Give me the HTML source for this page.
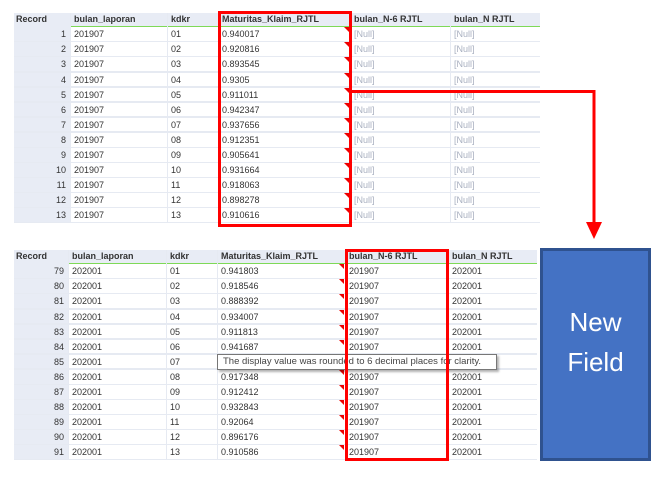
<!DOCTYPE html>
<html><head><meta charset="utf-8">
<style>
*{margin:0;padding:0;box-sizing:border-box}
body{width:667px;height:481px;background:#fff;position:relative;overflow:hidden;font-family:"Liberation Sans",sans-serif;font-size:9px;color:#333}
.t{position:absolute;background:#e6eaf2}
.r{position:absolute;left:0;height:15.1px;width:100%}
.c{position:absolute;top:0;height:13.6px;background:#fff;line-height:14px;padding-left:3px;white-space:nowrap}
.rec{background:#e8ecf5;text-align:right;padding-right:4px}
.h .c{background:#e8ecf5;font-weight:bold;color:#333;line-height:13px;height:14px}
.h .c.g{border-bottom:1px solid #7ed957}
.null{color:#a9b0c0}
.tri{position:absolute;right:1px;top:0;width:0;height:0;border-top:5px solid #e00;border-left:5px solid transparent}
.red{position:absolute;border:3px solid #f00}
.tr .c:nth-child(1){left:0;width:56px}.tr .c:nth-child(2){left:57px;width:96px}.tr .c:nth-child(3){left:154px;width:50px}.tr .c:nth-child(4){left:205px;width:131px}.tr .c:nth-child(5){left:337px;width:99px}.tr .c:nth-child(6){left:437px;width:89px}
.br .c:nth-child(1){left:0;width:54px}.br .c:nth-child(2){left:55px;width:97px}.br .c:nth-child(3){left:153px;width:50px}.br .c:nth-child(4){left:204px;width:127px}.br .c:nth-child(5){left:332px;width:102px}.br .c:nth-child(6){left:435px;width:88px}
.tw{position:absolute;left:14px;width:526px}
.bw{position:absolute;left:14px;width:523px}
</style></head><body>

<div class="t" style="left:14px;top:13px;width:526px;height:210px">
<div class="r h" style="top:0"><div class="c rec" style="left:0;width:56px;text-align:left;padding-left:2px">Record</div><div class="c g" style="left:57px;width:96px">bulan_laporan</div><div class="c g" style="left:154px;width:50px">kdkr</div><div class="c g" style="left:205px;width:131px">Maturitas_Klaim_RJTL</div><div class="c g" style="left:337px;width:99px">bulan_N-6 RJTL</div><div class="c g" style="left:437px;width:89px">bulan_N RJTL</div></div>
</div>

<div class="t" style="left:14px;top:250px;width:523px;height:210px">
<div class="r h" style="top:0"><div class="c rec" style="left:0;width:54px;text-align:left;padding-left:2px">Record</div><div class="c g" style="left:55px;width:97px">bulan_laporan</div><div class="c g" style="left:153px;width:50px">kdkr</div><div class="c g" style="left:204px;width:127px">Maturitas_Klaim_RJTL</div><div class="c g" style="left:332px;width:102px">bulan_N-6 RJTL</div><div class="c g" style="left:435px;width:88px">bulan_N RJTL</div></div>
</div>

<div class="tw" style="top:27.3px">
<div class="r tr" style="top:0"><div class="c rec">1</div><div class="c">201907</div><div class="c">01</div><div class="c">0.940017<i class="tri"></i></div><div class="c null">[Null]</div><div class="c null">[Null]</div></div>
<div class="r tr" style="top:15.1px"><div class="c rec">2</div><div class="c">201907</div><div class="c">02</div><div class="c">0.920816<i class="tri"></i></div><div class="c null">[Null]</div><div class="c null">[Null]</div></div>
<div class="r tr" style="top:30.2px"><div class="c rec">3</div><div class="c">201907</div><div class="c">03</div><div class="c">0.893545<i class="tri"></i></div><div class="c null">[Null]</div><div class="c null">[Null]</div></div>
<div class="r tr" style="top:45.3px"><div class="c rec">4</div><div class="c">201907</div><div class="c">04</div><div class="c">0.9305<i class="tri"></i></div><div class="c null">[Null]</div><div class="c null">[Null]</div></div>
<div class="r tr" style="top:60.4px"><div class="c rec">5</div><div class="c">201907</div><div class="c">05</div><div class="c">0.911011<i class="tri"></i></div><div class="c null">[Null]</div><div class="c null">[Null]</div></div>
<div class="r tr" style="top:75.5px"><div class="c rec">6</div><div class="c">201907</div><div class="c">06</div><div class="c">0.942347<i class="tri"></i></div><div class="c null">[Null]</div><div class="c null">[Null]</div></div>
<div class="r tr" style="top:90.6px"><div class="c rec">7</div><div class="c">201907</div><div class="c">07</div><div class="c">0.937656<i class="tri"></i></div><div class="c null">[Null]</div><div class="c null">[Null]</div></div>
<div class="r tr" style="top:105.7px"><div class="c rec">8</div><div class="c">201907</div><div class="c">08</div><div class="c">0.912351<i class="tri"></i></div><div class="c null">[Null]</div><div class="c null">[Null]</div></div>
<div class="r tr" style="top:120.8px"><div class="c rec">9</div><div class="c">201907</div><div class="c">09</div><div class="c">0.905641<i class="tri"></i></div><div class="c null">[Null]</div><div class="c null">[Null]</div></div>
<div class="r tr" style="top:135.9px"><div class="c rec">10</div><div class="c">201907</div><div class="c">10</div><div class="c">0.931664<i class="tri"></i></div><div class="c null">[Null]</div><div class="c null">[Null]</div></div>
<div class="r tr" style="top:151px"><div class="c rec">11</div><div class="c">201907</div><div class="c">11</div><div class="c">0.918063<i class="tri"></i></div><div class="c null">[Null]</div><div class="c null">[Null]</div></div>
<div class="r tr" style="top:166.1px"><div class="c rec">12</div><div class="c">201907</div><div class="c">12</div><div class="c">0.898278<i class="tri"></i></div><div class="c null">[Null]</div><div class="c null">[Null]</div></div>
<div class="r tr" style="top:181.2px"><div class="c rec">13</div><div class="c">201907</div><div class="c">13</div><div class="c">0.910616<i class="tri"></i></div><div class="c null">[Null]</div><div class="c null">[Null]</div></div>
</div>

<div class="bw" style="top:264.3px">
<div class="r br" style="top:0"><div class="c rec">79</div><div class="c">202001</div><div class="c">01</div><div class="c">0.941803<i class="tri"></i></div><div class="c">201907</div><div class="c">202001</div></div>
<div class="r br" style="top:15.1px"><div class="c rec">80</div><div class="c">202001</div><div class="c">02</div><div class="c">0.918546<i class="tri"></i></div><div class="c">201907</div><div class="c">202001</div></div>
<div class="r br" style="top:30.2px"><div class="c rec">81</div><div class="c">202001</div><div class="c">03</div><div class="c">0.888392<i class="tri"></i></div><div class="c">201907</div><div class="c">202001</div></div>
<div class="r br" style="top:45.3px"><div class="c rec">82</div><div class="c">202001</div><div class="c">04</div><div class="c">0.934007<i class="tri"></i></div><div class="c">201907</div><div class="c">202001</div></div>
<div class="r br" style="top:60.4px"><div class="c rec">83</div><div class="c">202001</div><div class="c">05</div><div class="c">0.911813<i class="tri"></i></div><div class="c">201907</div><div class="c">202001</div></div>
<div class="r br" style="top:75.5px"><div class="c rec">84</div><div class="c">202001</div><div class="c">06</div><div class="c">0.941687<i class="tri"></i></div><div class="c">201907</div><div class="c">202001</div></div>
<div class="r br" style="top:90.6px"><div class="c rec">85</div><div class="c">202001</div><div class="c">07</div><div class="c"></div><div class="c">201907</div><div class="c">202001</div></div>
<div class="r br" style="top:105.7px"><div class="c rec">86</div><div class="c">202001</div><div class="c">08</div><div class="c">0.917348<i class="tri"></i></div><div class="c">201907</div><div class="c">202001</div></div>
<div class="r br" style="top:120.8px"><div class="c rec">87</div><div class="c">202001</div><div class="c">09</div><div class="c">0.912412<i class="tri"></i></div><div class="c">201907</div><div class="c">202001</div></div>
<div class="r br" style="top:135.9px"><div class="c rec">88</div><div class="c">202001</div><div class="c">10</div><div class="c">0.932843<i class="tri"></i></div><div class="c">201907</div><div class="c">202001</div></div>
<div class="r br" style="top:151px"><div class="c rec">89</div><div class="c">202001</div><div class="c">11</div><div class="c">0.92064<i class="tri"></i></div><div class="c">201907</div><div class="c">202001</div></div>
<div class="r br" style="top:166.1px"><div class="c rec">90</div><div class="c">202001</div><div class="c">12</div><div class="c">0.896176<i class="tri"></i></div><div class="c">201907</div><div class="c">202001</div></div>
<div class="r br" style="top:181.2px"><div class="c rec">91</div><div class="c">202001</div><div class="c">13</div><div class="c">0.910586<i class="tri"></i></div><div class="c">201907</div><div class="c">202001</div></div>
</div>

<div style="position:absolute;left:217px;top:354px;width:280px;height:16px;background:#fff;border:1px solid #777;box-shadow:2px 2px 2px rgba(0,0,0,.3);font-size:9.5px;line-height:14px;padding-left:5px;color:#444;white-space:nowrap">The display value was rounded to 6 decimal places for clarity.</div>

<div class="red" style="left:218px;top:11px;width:134px;height:216px"></div>
<div class="red" style="left:345px;top:249px;width:104px;height:212px"></div>

<svg style="position:absolute;left:0;top:0" width="667" height="481">
<polyline points="351,91.5 594,91.5 594,224" fill="none" stroke="#f00" stroke-width="3"/>
<polygon points="586,222 602,222 594,239" fill="#f00"/>
</svg>

<div style="position:absolute;left:540px;top:248px;width:111px;height:213px;background:#4472c4;border:3px solid #2f528f;color:#fff;font-size:26px;text-align:center;padding-top:51px;line-height:40px">New<br>Field</div>

</body></html>
